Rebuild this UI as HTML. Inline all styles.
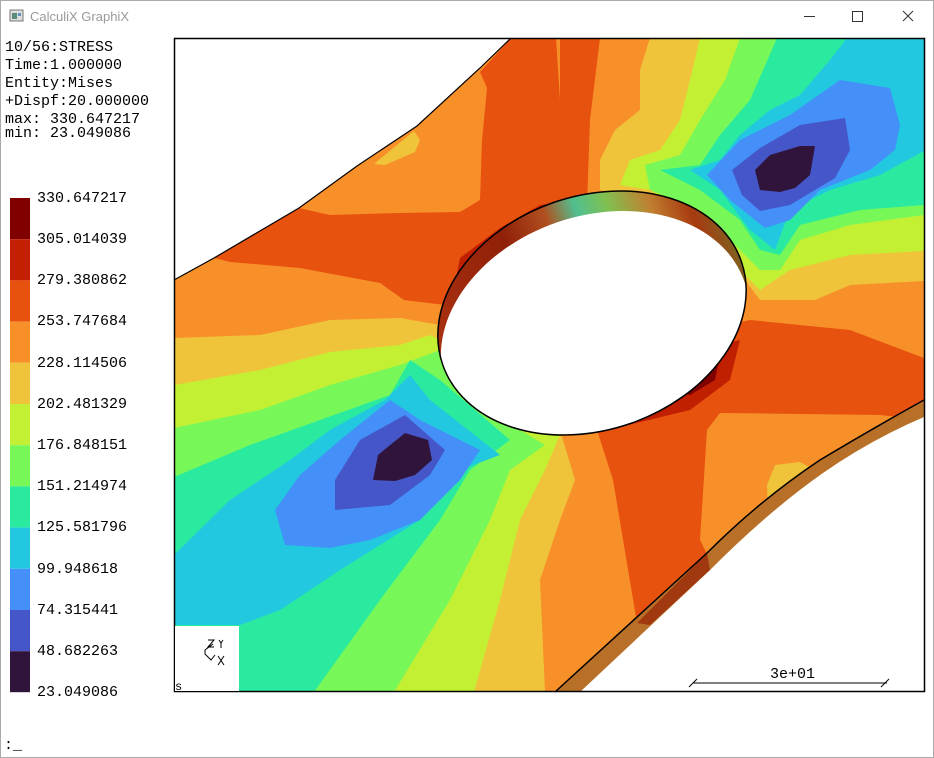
<!DOCTYPE html>
<html><head><meta charset="utf-8"><style>
html,body{margin:0;padding:0;background:#fff;}
body{width:934px;height:758px;position:relative;overflow:hidden;}
.win{position:absolute;left:0;top:0;width:932px;height:756px;border:1px solid #aaa;}
.title{position:absolute;left:30px;top:9px;font:13px "Liberation Sans",sans-serif;color:#999;}
.mono{position:absolute;font:15px "Liberation Mono",monospace;color:#000;white-space:pre;line-height:15px;}
</style></head><body>
<div class="win"></div>
<svg style="position:absolute;left:0;top:0" width="934" height="758">
<rect x="10" y="10" width="13" height="11" fill="#ddd" stroke="#777"/>
<rect x="12" y="13" width="5" height="6" fill="#5a8a7a"/>
<rect x="18" y="13" width="3" height="3" fill="#6090c0"/>
<line x1="804" y1="16.5" x2="815" y2="16.5" stroke="#333"/>
<rect x="852.5" y="11.5" width="10" height="10" fill="none" stroke="#333"/>
<path d="M903 11 L913 21 M913 11 L903 21" stroke="#333"/>
<defs>
<clipPath id="plate"><path d="M174,280 L214,258 L299,208 L357,166 L417,126 L480,68 L511,38 L924,38 L924,400 Q870,430 820,460 Q760,500 707,553 L555,692 L174,692 Z"/></clipPath>
<clipPath id="hole"><ellipse cx="592" cy="313" rx="158" ry="117" transform="rotate(-19 592 313)"/></clipPath>
<linearGradient id="rim" x1="440" y1="0" x2="750" y2="0" gradientUnits="userSpaceOnUse">
<stop offset="0" stop-color="#a83010"/><stop offset="0.3" stop-color="#902008"/><stop offset="0.45" stop-color="#b05020"/>
<stop offset="0.55" stop-color="#50c090"/><stop offset="0.65" stop-color="#80c050"/><stop offset="0.78" stop-color="#c08030"/>
<stop offset="0.9" stop-color="#a83a10"/><stop offset="1" stop-color="#806020"/></linearGradient>
</defs>
<g clip-path="url(#plate)">
<rect x="174" y="38" width="751" height="655" fill="#f8902a"/>
<polygon fill="#e8520f" points="214,258 299,208 330,215 400,213 460,212 480,200 482,140 487,88 480,72 511,38 556,38 560,100 570,155 590,200 600,260 530,300 445,305 404,300 380,283 300,268 230,262"/>
<polygon fill="#e8520f" points="560,38 600,38 590,120 587,205 560,210"/>
<polygon fill="#e8520f" points="597,430 640,400 700,330 750,320 850,330 924,358 924,420 880,415 720,413 707,430 700,540 710,560 637,623 613,480"/>
<polygon fill="#c02000" points="455,283 460,258 500,228 540,205 570,200 580,230 520,280 470,300"/>
<polygon fill="#c02000" points="620,427 630,400 660,385 700,370 720,345 740,340 730,380 690,410"/>
<polygon fill="#800000" points="485,270 505,248 540,228 560,225 530,262 495,285"/>
<polygon fill="#800000" points="670,390 700,370 720,355 715,380 690,395"/>
<polygon fill="#f0c43a" points="374,164 414,131 420,140 415,152 385,165"/>
<polygon fill="#f0c43a" points="767,485 775,465 800,462 815,470 790,500 768,510"/>
<polygon fill="#78f858" points="785,490 800,475 810,478 795,495"/>
<polygon fill="#f0c43a" points="174,338 260,335 330,320 400,318 440,325 480,330 520,340 560,370 560,430 575,480 560,520 540,580 545,692 174,692"/>
<polygon fill="#c4f034" points="174,385 260,370 330,352 400,345 430,335 470,355 530,420 560,435 545,470 520,520 500,600 474,692 174,692"/>
<polygon fill="#78f858" points="174,428 260,410 330,385 400,365 440,350 470,372 520,430 545,445 510,470 490,520 450,600 394,692 174,692"/>
<polygon fill="#2aeaa0" points="174,477 250,445 320,420 390,395 410,360 440,380 510,440 470,470 440,520 380,600 314,692 174,692"/>
<polygon fill="#22c8e0" points="174,555 230,500 290,460 330,430 385,400 410,375 430,400 500,455 460,470 420,520 340,570 280,610 240,625 174,625"/>
<polygon fill="#4490f8" points="275,510 300,475 340,440 390,400 420,420 480,450 460,480 420,520 370,540 330,548 285,545"/>
<polygon fill="#4456c8" points="335,480 360,440 405,415 445,450 430,475 390,505 335,510"/>
<polygon fill="#30143c" points="373,480 378,455 405,433 428,440 432,460 415,475 395,481"/>
<polygon fill="#f0c43a" points="650,38 924,38 924,281 850,285 815,300 760,300 745,280 700,230 640,200 600,190 600,160 615,130 640,110 640,70"/>
<polygon fill="#c4f034" points="700,38 924,38 924,251 850,255 790,270 760,290 740,270 700,220 650,190 620,185 630,160 660,150 680,120 690,80"/>
<polygon fill="#78f858" points="740,38 924,38 924,215 850,225 800,240 780,270 760,270 730,240 700,210 650,190 645,165 680,155 700,120 725,80"/>
<polygon fill="#2aeaa0" points="777,38 924,38 924,205 860,210 800,225 780,255 760,250 740,220 700,190 660,170 700,165 720,135 750,100"/>
<polygon fill="#22c8e0" points="847,38 924,38 924,151 880,175 830,190 790,210 775,250 750,230 720,190 690,170 720,160 740,135 770,110 800,95 830,60"/>
<polygon fill="#4490f8" points="707,175 740,140 790,115 840,80 890,88 900,125 895,150 870,170 820,190 790,220 765,228 730,200"/>
<polygon fill="#4456c8" points="732,170 760,148 800,125 845,118 850,150 835,178 790,205 760,211 742,195"/>
<polygon fill="#30143c" points="755,170 770,155 800,146 815,146 810,175 795,188 780,192 760,190"/>
</g>
<path d="M924,400 Q870,430 820,460 Q760,500 707,553 L555,692 L580,692 L710,570 Q770,510 823,473 Q870,440 924,417 Z" fill="#b87028"/>
<path d="M707,553 L637,623 L650,625 L710,570 Z" fill="#a03810"/>
<path d="M924,400 Q870,430 820,460 Q760,500 707,553 L555,692" fill="none" stroke="#000" stroke-width="1.5"/>
<path d="M174,280 L214,258 L299,208 L357,166 L417,126 L480,68 L511,38" fill="none" stroke="#000" stroke-width="1.2"/>
<ellipse cx="592" cy="313" rx="158" ry="117" transform="rotate(-19 592 313)" fill="url(#rim)"/>
<g clip-path="url(#hole)"><ellipse cx="595" cy="333" rx="158" ry="117" transform="rotate(-19 595 333)" fill="#fff"/></g>
<ellipse cx="592" cy="313" rx="158" ry="117" transform="rotate(-19 592 313)" fill="none" stroke="#000" stroke-width="1.5"/>
<rect x="174.5" y="38.5" width="750" height="653" fill="none" stroke="#000" stroke-width="1.5"/>
<rect x="175" y="626" width="64" height="65" fill="#fff"/>
<path d="M208,640 h6 l-6,7 h6 M213,644 l-8,6 v4 l6,6 l4,-5 M219,640 l2,3 l2,-3 M221,643 v5 M218,656 l6,9 M224,656 l-6,9" fill="none" stroke="#000" stroke-width="1"/>
<line x1="693" y1="683" x2="887" y2="683" stroke="#000"/>
<line x1="689" y1="687" x2="697" y2="679" stroke="#000"/>
<line x1="881" y1="687" x2="889" y2="679" stroke="#000"/>
<rect x="10" y="198" width="20" height="41.2" fill="#800000"/>
<rect x="10" y="239.2" width="20" height="41.2" fill="#c22000"/>
<rect x="10" y="280.4" width="20" height="41.2" fill="#e8520f"/>
<rect x="10" y="321.6" width="20" height="41.2" fill="#f8902a"/>
<rect x="10" y="362.8" width="20" height="41.2" fill="#f0c43a"/>
<rect x="10" y="404" width="20" height="41.2" fill="#c4f034"/>
<rect x="10" y="445.2" width="20" height="41.2" fill="#78f858"/>
<rect x="10" y="486.4" width="20" height="41.2" fill="#2aeaa0"/>
<rect x="10" y="527.6" width="20" height="41.2" fill="#22c8e0"/>
<rect x="10" y="568.8" width="20" height="41.2" fill="#4490f8"/>
<rect x="10" y="610" width="20" height="41.2" fill="#4456c8"/>
<rect x="10" y="651.2" width="20" height="41" fill="#30143c"/>
</svg>
<div class="title">CalculiX GraphiX</div>
<div class="mono" style="left:5px;top:40px">10/56:STRESS</div>
<div class="mono" style="left:5px;top:58px">Time:1.000000</div>
<div class="mono" style="left:5px;top:76px">Entity:Mises</div>
<div class="mono" style="left:5px;top:94px">+Dispf:20.000000</div>
<div class="mono" style="left:5px;top:112px">max: 330.647217</div>
<div class="mono" style="left:5px;top:126px">min: 23.049086</div>
<div class="mono" style="left:37px;top:191px">330.647217</div>
<div class="mono" style="left:37px;top:232px">305.014039</div>
<div class="mono" style="left:37px;top:273px">279.380862</div>
<div class="mono" style="left:37px;top:314px">253.747684</div>
<div class="mono" style="left:37px;top:356px">228.114506</div>
<div class="mono" style="left:37px;top:397px">202.481329</div>
<div class="mono" style="left:37px;top:438px">176.848151</div>
<div class="mono" style="left:37px;top:479px">151.214974</div>
<div class="mono" style="left:37px;top:520px">125.581796</div>
<div class="mono" style="left:37px;top:562px">99.948618</div>
<div class="mono" style="left:37px;top:603px">74.315441</div>
<div class="mono" style="left:37px;top:644px">48.682263</div>
<div class="mono" style="left:37px;top:685px">23.049086</div>
<div class="mono" style="left:770px;top:667px">3e+01</div>
<div class="mono" style="left:175px;top:680px;font-size:12px">s</div>
<div class="mono" style="left:4px;top:738px">:_</div>
</body></html>
